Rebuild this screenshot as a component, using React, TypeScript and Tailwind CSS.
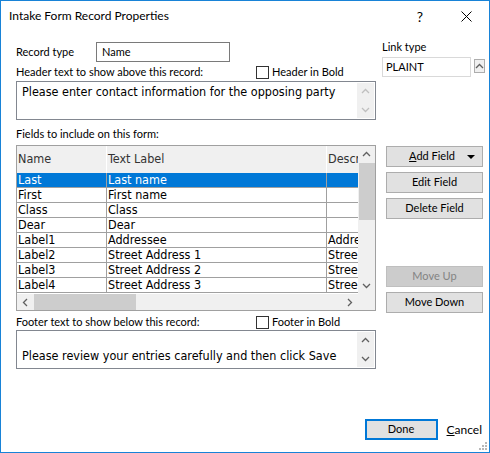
import React from 'react';

const ui = { fontFamily: 'Lato, "Noto Sans", sans-serif' };
const grid = { fontFamily: '"DejaVu Sans Condensed", "DejaVu Sans", sans-serif' };

type Row = { name: string; label: string; descr: string };

// the description column is scrolled out of view, only its first letters show
const rows: Row[] = [
  { name: 'Last', label: 'Last name', descr: '' },
  { name: 'First', label: 'First name', descr: '' },
  { name: 'Class', label: 'Class', descr: '' },
  { name: 'Dear', label: 'Dear', descr: '' },
  { name: 'Label1', label: 'Addressee', descr: 'Addre' },
  { name: 'Label2', label: 'Street Address 1', descr: 'Stree' },
  { name: 'Label3', label: 'Street Address 2', descr: 'Stree' },
  { name: 'Label4', label: 'Street Address 3', descr: 'Stree' },
];

const Chevron = ({ dir, color = '#606060' }: { dir: 'up' | 'down' | 'left' | 'right'; color?: string }) => {
  const pts = {
    up: '1,6 4.5,2.5 8,6',
    down: '1,3 4.5,6.5 8,3',
    left: '6,1 2.5,4.5 6,8',
    right: '3,1 6.5,4.5 3,8',
  }[dir];
  return (
    <svg width="9" height="9" viewBox="0 0 9 9">
      <polyline points={pts} fill="none" stroke={color} strokeWidth="1.3" />
    </svg>
  );
};

const Checkbox = ({ label }: { label: string }) => (
  <div className="flex items-center gap-[3px]">
    <div className="w-[13px] h-[13px] border border-[#333333] bg-white" />
    <span>{label}</span>
  </div>
);

const TextBox = ({ text, bottom, dim }: { text: string; bottom?: boolean; dim?: boolean }) => (
  <div className="h-[39px] border border-[#828790] flex bg-white">
    <div
      className={`flex-1 pl-[5px] text-[12.5px] text-black flex whitespace-nowrap ${
        bottom ? 'items-end pb-[2px]' : 'items-start pt-[1px]'
      }`}
      style={grid}
    >
      {text}
    </div>
    <div className="w-[17px] bg-[#f0f0f0] flex flex-col items-center justify-around my-[1px] mr-[1px]">
      <Chevron dir="up" color={dim ? '#bfbfbf' : '#606060'} />
      <Chevron dir="down" color={dim ? '#bfbfbf' : '#606060'} />
    </div>
  </div>
);

const Btn = ({ children, disabled }: { children: React.ReactNode; disabled?: boolean }) => (
  <div
    className={`h-[21px] w-[97px] border flex items-center justify-center ${
      disabled ? 'bg-[#cccccc] border-[#bfbfbf] text-[#838383]' : 'bg-[#e1e1e1] border-[#adadad] text-black'
    }`}
  >
    {children}
  </div>
);

const cell = 'pl-[1px] overflow-hidden whitespace-nowrap';

const FieldGrid = () => (
  <div className="h-[166px] border border-[#a0a0a0] flex flex-col overflow-hidden" style={grid}>
    <div className="flex flex-1 min-h-0">
      <div className="w-[341px] overflow-hidden text-[12.5px]">
        {/* column headers */}
        <div className="h-[27px] flex bg-[#f0f0f0] text-[#333333]">
          <div className={`w-[90px] border-r border-white flex items-center ${cell}`}>Name</div>
          <div className={`w-[220px] border-r border-white flex items-center ${cell}`}>Text Label</div>
          <div className={`w-[31px] flex items-center ${cell}`}>Descr</div>
        </div>
        {rows.map((r, i) => {
          const sel = i === 0;
          return (
            <div
              key={r.name}
              className={`h-[15px] flex border-b border-[#a0a0a0] leading-[14px] ${
                sel ? 'bg-[#0078d7] text-white' : 'bg-white text-black'
              }`}
            >
              <div className={`w-[90px] border-r border-[#a0a0a0] ${cell}`}>{r.name}</div>
              <div className={`w-[220px] border-r border-[#a0a0a0] ${cell}`}>{r.label}</div>
              <div className={`w-[31px] ${cell}`}>{r.descr}</div>
            </div>
          );
        })}
      </div>
      {/* vertical scrollbar */}
      <div className="w-[17px] bg-[#f0f0f0] flex flex-col items-center">
        <div className="h-[17px] flex items-center justify-center">
          <Chevron dir="up" />
        </div>
        <div className="w-[16px] h-[57px] bg-[#cdcdcd]" />
        <div className="flex-1" />
        <div className="h-[17px] flex items-center justify-center">
          <Chevron dir="down" />
        </div>
      </div>
    </div>
    {/* horizontal scrollbar */}
    <div className="h-[16px] bg-[#f0f0f0] flex items-center">
      <div className="w-[17px] flex justify-center">
        <Chevron dir="left" />
      </div>
      <div className="w-[102px] h-[16px] bg-[#cdcdcd]" />
      <div className="flex-1" />
      <div className="w-[17px] flex justify-center">
        <Chevron dir="right" />
      </div>
      <div className="w-[17px]" />
    </div>
  </div>
);

export default function App() {
  return (
    <div
      className="w-[490px] h-[453px] border border-[#1883d7] bg-white flex flex-col text-[11px] text-black relative"
      style={ui}
    >
      {/* title bar */}
      <div className="h-[30px] flex items-center shrink-0">
        <span className="pl-[8px] text-[12px]">Intake Form Record Properties</span>
        <div className="ml-auto flex h-full">
          <div className="w-[46px] flex items-center justify-center text-[14px]">?</div>
          <div className="w-[46px] flex items-center justify-center">
            <svg width="11" height="11" viewBox="0 0 11 11">
              <path d="M0.5 0.5 L10.5 10.5 M10.5 0.5 L0.5 10.5" stroke="#000" strokeWidth="1" />
            </svg>
          </div>
        </div>
      </div>

      <div className="flex pl-[15px]">
        {/* left column */}
        <div className="w-[360px] flex flex-col">
          <div className="mt-[11px] flex items-center">
            <span className="w-[80px]">Record type</span>
            <div className="w-[134px] h-[20px] border border-[#7a7a7a] pl-[5px] flex items-center">Name</div>
          </div>
          <div className="mt-[3px] h-[14px] flex items-center">
            <span className="w-[240px]">Header text to show above this record:</span>
            <Checkbox label="Header in Bold" />
          </div>
          <div className="mt-[2px]">
            <TextBox text="Please enter contact information for the opposing party" dim />
          </div>
          <div className="mt-[7px] h-[14px] flex items-center">Fields to include on this form:</div>
          <div className="mt-[4px]">
            <FieldGrid />
          </div>
          <div className="mt-[4px] h-[14px] flex items-center">
            <span className="w-[240px]">Footer text to show below this record:</span>
            <Checkbox label="Footer in Bold" />
          </div>
          <div className="mt-[1px]">
            <TextBox text="Please review your entries carefully and then click Save" bottom />
          </div>
        </div>

        {/* right column */}
        <div className="ml-[6px] flex flex-col">
          <div className="mt-[9px] h-[14px] flex items-center">Link type</div>
          <div className="mt-[3px] flex items-start">
            <div className="w-[89px] h-[20px] border border-[#d9d9d9] pl-[3px] flex items-center">PLAINT</div>
            <div className="ml-[3px] mt-[2px] w-[11px] h-[14px] border border-[#adadad] bg-[#f0f0f0] flex items-center justify-center">
              <Chevron dir="up" />
            </div>
          </div>
          <div className="mt-[69px] ml-[4px] flex flex-col gap-[5px]">
            <Btn>
              <span className="flex-1 text-center pl-[10px]">
                <span className="underline">A</span>dd Field
              </span>
              <svg width="8" height="4" viewBox="0 0 8 4" className="mr-[7px]">
                <path d="M0 0 L8 0 L4 4 Z" fill="#000" />
              </svg>
            </Btn>
            <Btn>Edit Field</Btn>
            <Btn>Delete Field</Btn>
            <div className="h-[37px]" />
            <Btn disabled>Move Up</Btn>
            <Btn>Move Down</Btn>
          </div>
        </div>
      </div>

      <div className="flex-1" />

      {/* dialog buttons */}
      <div className="flex items-center justify-end pr-[7px] pb-[12px] gap-[9px]">
        <div className="w-[73px] h-[21px] border-2 border-[#0078d7] bg-[#e1e1e1] flex items-center justify-center">
          Done
        </div>
        <span className="text-[12px]">
          <span className="underline">C</span>ancel
        </span>
      </div>

      {/* resize grip */}
      <div className="absolute right-[2px] bottom-[2px] grid grid-cols-3 gap-[1px]">
        {[0, 0, 1, 0, 1, 1, 1, 1, 1].map((on, i) => (
          <div key={i} className={`w-[2px] h-[2px] ${on ? 'bg-[#b8b8b8]' : ''}`} />
        ))}
      </div>
    </div>
  );
}
